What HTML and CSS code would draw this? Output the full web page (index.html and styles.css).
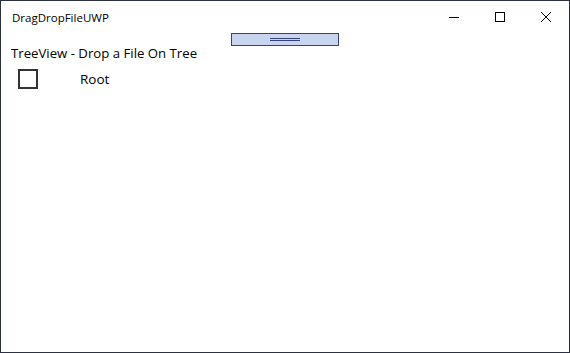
FILE: index.html
```html
<!DOCTYPE html>
<html lang="en">
<head>
    <meta charset="UTF-8" />
    <title>DragDropFileUWP</title>
    <link rel="stylesheet" href="styles.css">
</head>
<body>

<div class="window">

    <!-- Title bar -->
    <div class="titlebar">
        <span class="app-title">DragDropFileUWP</span>
        <div class="caption-buttons">
            <button class="caption-btn" aria-label="Minimize">
                <svg width="10" height="10" viewBox="0 0 10 10"><path d="M0 5.5h10" stroke="#000" stroke-width="1"/></svg>
            </button>
            <button class="caption-btn" aria-label="Maximize">
                <svg width="10" height="10" viewBox="0 0 10 10"><rect x="0.5" y="0.5" width="9" height="9" fill="none" stroke="#000" stroke-width="1"/></svg>
            </button>
            <button class="caption-btn" aria-label="Close">
                <svg width="10" height="10" viewBox="0 0 10 10"><path d="M0 0L10 10M10 0L0 10" stroke="#000" stroke-width="1"/></svg>
            </button>
        </div>
    </div>

    <!-- Debug toolbar over content -->
    <div class="debug-bar"><span class="grip"></span></div>

    <!-- Page content -->
    <div class="content">
        <p class="heading">TreeView - Drop a File On Tree</p>
        <div class="tree-item">
            <span class="check"></span>
            <span class="label">Root</span>
        </div>
    </div>

</div>

</body>
</html>
```

FILE: styles.css
```css
* {
    box-sizing: border-box;
    margin: 0;
    padding: 0;
}

body {
    font-family: "Open Sans", "Noto Sans", sans-serif;
    background: #fff;
    color: #000;
}

/* Window frame */
.window {
    position: relative;
    width: 570px;
    height: 353px;
    border: 1px solid #2b3140;
    background: #fff;
}

/* Title bar */
.titlebar {
    display: flex;
    align-items: center;
    height: 32px;
}
.app-title {
    flex: 1;
    padding-left: 11px;
    font-size: 11.5px;
}
.caption-buttons {
    display: flex;
}
.caption-btn {
    width: 46px;
    height: 32px;
    border: none;
    background: transparent;
    display: flex;
    align-items: center;
    justify-content: center;
}

/* Debug toolbar */
.debug-bar {
    position: absolute;
    left: 230px;
    top: 32px;
    width: 108px;
    height: 13px;
    background: #c9d4ee;
    border: 1px solid #38417a;
    display: flex;
    align-items: center;
    justify-content: center;
}
.grip {
    width: 30px;
    height: 3px;
    border-top: 1px solid #38417a;
    border-bottom: 1px solid #38417a;
}

/* Content */
.content {
    padding: 10px 0 0 10px;
}
.heading {
    font-size: 13.2px;
    line-height: 20px;
}
.tree-item {
    display: flex;
    align-items: center;
    gap: 42px;
    margin-top: 6px;
    padding-left: 7px;
}
.check {
    width: 20px;
    height: 20px;
    border: 2px solid #333;
}
.label {
    font-size: 13.5px;
}
```
